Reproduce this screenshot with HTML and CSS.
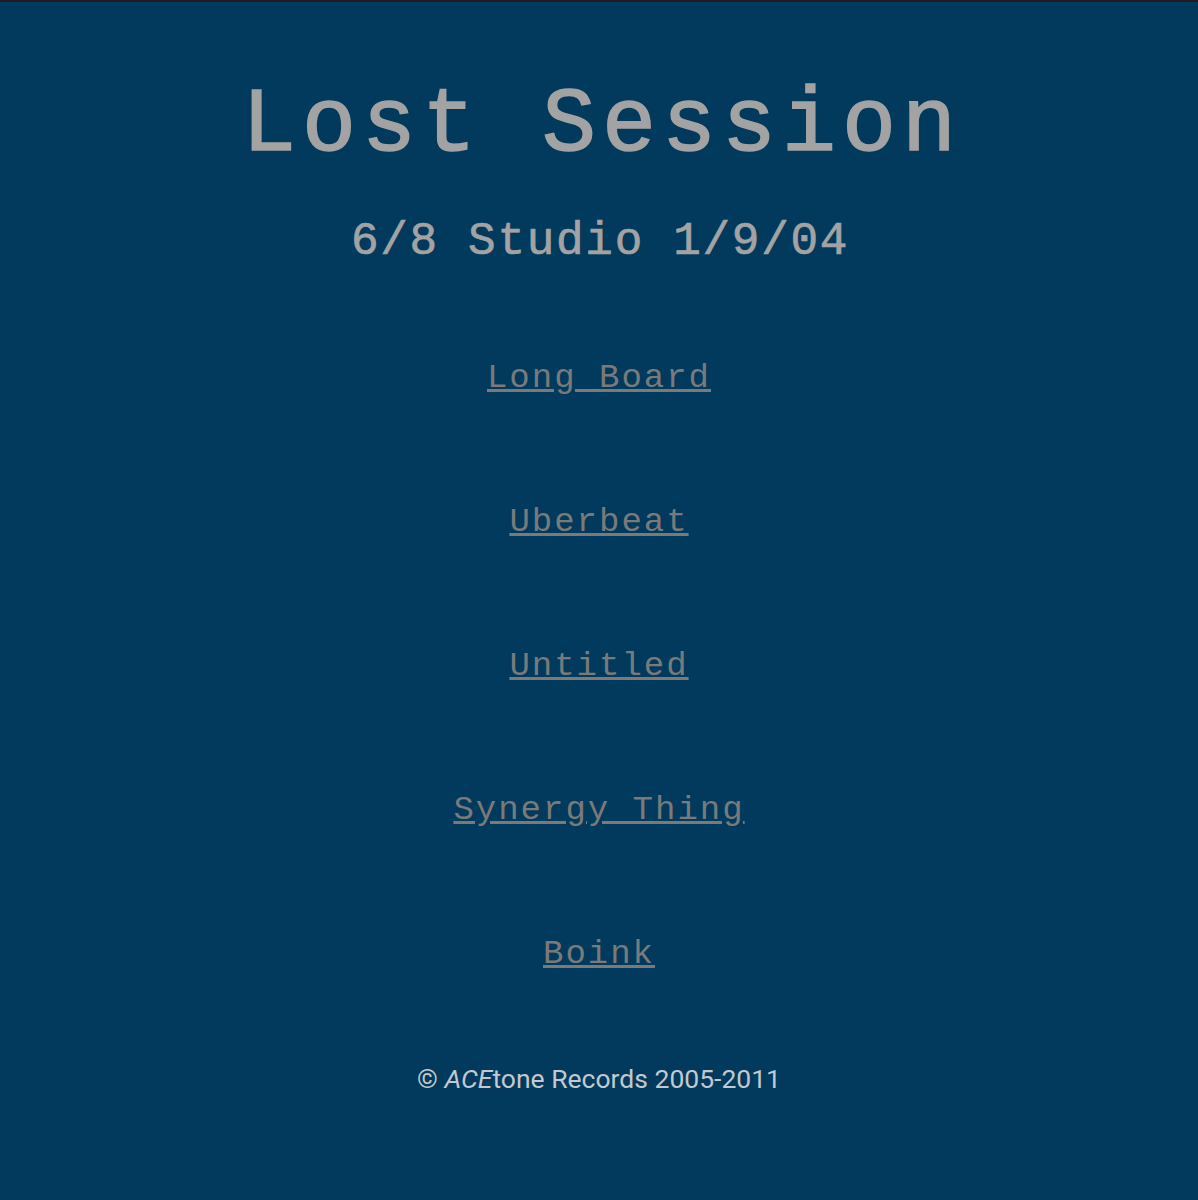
FILE: index.html
```html
<!DOCTYPE html>
<html lang="en">
<head>
<meta charset="utf-8">
<title>Lost Session</title>
<link rel="stylesheet" href="styles.css">
</head>
<body>
<div class="topbar"></div>
<main class="page">
  <header class="head">
    <h1 class="title">Lost Session</h1>
    <h2 class="subtitle">6/8 Studio 1/9/04</h2>
  </header>
  <ul class="tracks">
    <li><a href="#">Long Board</a></li>
    <li><a href="#">Uberbeat</a></li>
    <li><a href="#">Untitled</a></li>
    <li><a href="#">Synergy Thing</a></li>
    <li><a href="#">Boink</a></li>
  </ul>
  <footer class="foot">© <em>ACE</em>tone Records 2005-2011</footer>
</main>
</body>
</html>
```

FILE: styles.css
```css
html, body {
  margin: 0;
  padding: 0;
}

body {
  background: #013a5c;
  min-height: 1200px;
  font-family: "Liberation Mono", "Courier New", monospace;
}

.topbar {
  height: 2px;
  background: #1c1e22;
}

.page {
  display: flex;
  flex-direction: column;
  align-items: center;
}

.head {
  display: flex;
  flex-direction: column;
  align-items: center;
}

.title {
  margin: 74px 0 0;
  padding-left: 6px;
  font-size: 90px;
  line-height: 100px;
  letter-spacing: 6px;
  font-weight: normal;
  -webkit-text-stroke: 1.6px #a3a3a3;
  color: #a3a3a3;
}

.subtitle {
  margin: 38px 0 0;
  padding-left: 2px;
  font-size: 46px;
  line-height: 56px;
  letter-spacing: 1.7px;
  font-weight: normal;
  -webkit-text-stroke: 0.7px #a3a3a3;
  color: #a3a3a3;
}

.tracks {
  list-style: none;
  margin: 86px 0 0;
  padding: 0;
  display: flex;
  flex-direction: column;
  align-items: center;
  gap: 95px;
}

.tracks li {
  line-height: 44px;
}

.tracks a {
  font-size: 34px;
  letter-spacing: 2px;
  color: #7a7a7a;
  text-decoration: underline;
}

.foot {
  margin-top: 82px;
  font-family: Roboto, "Liberation Sans", sans-serif;
  font-size: 26.5px;
  color: #c3c9cf;
}
```
